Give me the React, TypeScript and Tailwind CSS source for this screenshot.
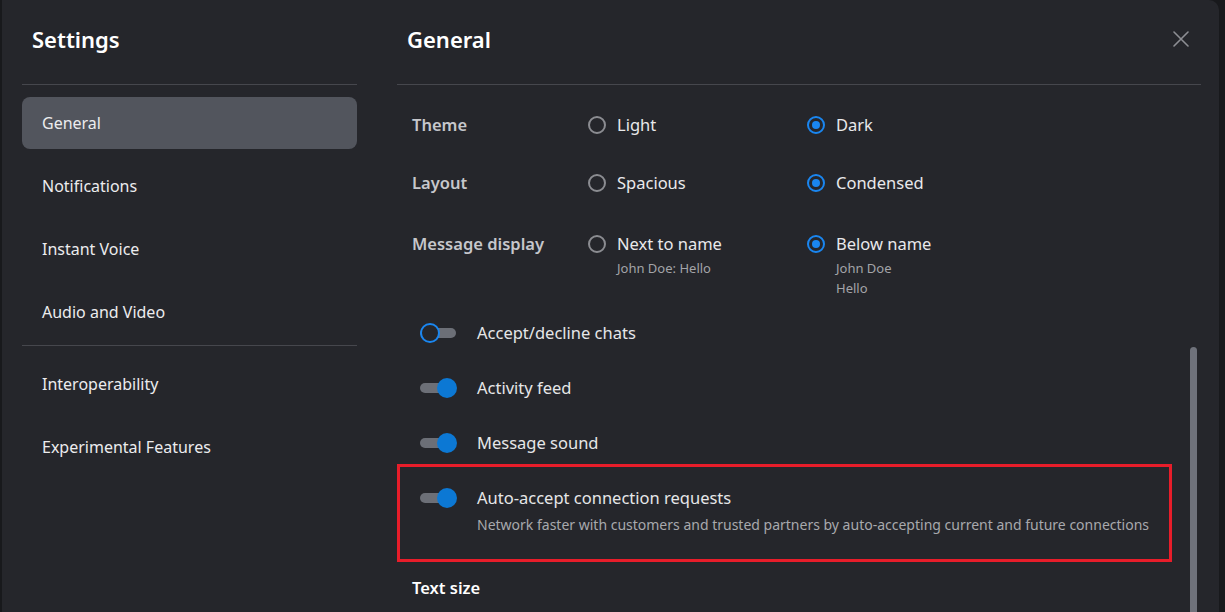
import React from "react";

const font = { fontFamily: '"Noto Sans", "Open Sans", sans-serif' };

const navTop = ["General", "Notifications", "Instant Voice", "Audio and Video"];
const navBottom = ["Interoperability", "Experimental Features"];

const Radio = ({ checked, label, hint }: { checked?: boolean; label: string; hint?: string[] }) => (
  <div className="flex items-start">
    <div
      className={`mt-[3px] w-[18px] h-[18px] rounded-full border-2 flex items-center justify-center shrink-0 ${
        checked ? "border-[#1a86f0]" : "border-[#8b8c91]"
      }`}
    >
      {checked && <div className="w-[8px] h-[8px] rounded-full bg-[#1a86f0]" />}
    </div>
    <div className="ml-[11px]">
      <div className="text-[16.5px] leading-[24px] text-[#e9e9eb]">{label}</div>
      {hint && (
        <div className="mt-[2px]">
          {hint.map((h) => (
            <div key={h} className="text-[13px] leading-[20px] text-[#a3a4a8]">
              {h}
            </div>
          ))}
        </div>
      )}
    </div>
  </div>
);

const Toggle = ({ on }: { on?: boolean }) => (
  <div className="relative w-[37px] h-[20px] shrink-0">
    <div className="absolute left-0 right-[1px] top-[5px] h-[10px] rounded-full bg-[#6c6f77]" />
    {on ? (
      <div className="absolute right-0 top-0 w-[20px] h-[20px] rounded-full bg-[#0c78d4]" />
    ) : (
      <div className="absolute left-0 top-0 w-[20px] h-[20px] rounded-full border-2 border-[#1a86f0] bg-[#25262b]" />
    )}
  </div>
);

const ToggleRow = ({ on, label, desc }: { on?: boolean; label: string; desc?: string }) => (
  <div className="flex items-start">
    <div className="mt-[2px]">
      <Toggle on={on} />
    </div>
    <div className="ml-[20px]">
      <div className="text-[16.5px] leading-[24px] text-[#e6e6e8]">{label}</div>
      {desc && <div className="mt-[5px] text-[14px] leading-[20px] text-[#a8a9ad]">{desc}</div>}
    </div>
  </div>
);

export default function App() {
  return (
    <div className="w-[1225px] h-[612px] overflow-hidden bg-[#18191c] pl-[2px]" style={font}>
      <div className="w-[1217px] h-[640px] bg-[#25262b] rounded-tr-[10px] flex">
        {/* Sidebar */}
        <div className="w-[335px] ml-[20px] shrink-0">
          <div className="h-[84px] flex items-center pb-[6px] px-[10px]">
            <h1 className="text-[22px] font-semibold text-white">Settings</h1>
          </div>
          <div className="h-px bg-[#46474d]" />
          <div className="mt-[12px]">
            {navTop.map((item, i) => (
              <div
                key={item}
                className={`h-[52px] flex items-center px-[20px] rounded-lg mb-[11px] text-[16px] text-[#ececee] ${
                  i === 0 ? "bg-[#52555d]" : ""
                }`}
              >
                {item}
              </div>
            ))}
          </div>
          <div className="h-px bg-[#46474d] -mt-[4px]" />
          <div className="mt-[12px]">
            {navBottom.map((item) => (
              <div key={item} className="h-[52px] flex items-center px-[20px] mb-[11px] text-[16px] text-[#ececee]">
                {item}
              </div>
            ))}
          </div>
        </div>

        {/* Main */}
        <div className="w-[804px] ml-[40px] flex flex-col">
          <div className="h-[84px] flex items-center justify-between pb-[6px] pl-[10px] pr-[12px]">
            <h2 className="text-[22px] font-semibold text-white">General</h2>
            <svg width="16" height="16" viewBox="0 0 16 16" className="text-[#8d8e93]">
              <path d="M1 1 L15 15 M15 1 L1 15" stroke="currentColor" strokeWidth="1.6" strokeLinecap="round" />
            </svg>
          </div>
          <div className="h-px bg-[#46474d]" />

          <div className="flex flex-1">
            <div className="flex-1">
              <div className="pl-[15px] mt-[28px] flex flex-col">
                <div className="flex">
                  <div className="w-[176px] text-[16.5px] leading-[24px] font-semibold text-[#c6c7cb]">Theme</div>
                  <div className="w-[219px]">
                    <Radio label="Light" />
                  </div>
                  <Radio checked label="Dark" />
                </div>
                <div className="flex mt-[34px]">
                  <div className="w-[176px] text-[16.5px] leading-[24px] font-semibold text-[#c6c7cb]">Layout</div>
                  <div className="w-[219px]">
                    <Radio label="Spacious" />
                  </div>
                  <Radio checked label="Condensed" />
                </div>
                <div className="flex mt-[37px]">
                  <div className="w-[176px] text-[16.5px] leading-[24px] font-semibold text-[#c6c7cb]">Message display</div>
                  <div className="w-[219px]">
                    <Radio label="Next to name" hint={["John Doe: Hello"]} />
                  </div>
                  <Radio checked label="Below name" hint={["John Doe", "Hello"]} />
                </div>
              </div>

              <div className="pl-[23px] mt-[23px] flex flex-col gap-[31px]">
                <ToggleRow label="Accept/decline chats" />
                <ToggleRow on label="Activity feed" />
                <ToggleRow on label="Message sound" />
              </div>

              <div className="mt-[9px] w-[775px] border-[3px] border-[#e81d2a] pl-[20px] pt-[19px] pb-[24px]">
                <ToggleRow
                  on
                  label="Auto-accept connection requests"
                  desc="Network faster with customers and trusted partners by auto-accepting current and future connections"
                />
              </div>

              <div className="pl-[15px] mt-[14px] text-[16.5px] leading-[24px] font-semibold text-white">Text size</div>
            </div>

            <div className="w-[7px] mr-[4px] flex flex-col">
              <div className="mt-[262px] flex-1 rounded-full bg-[#6f727b]" />
            </div>
          </div>
        </div>
      </div>
    </div>
  );
}
